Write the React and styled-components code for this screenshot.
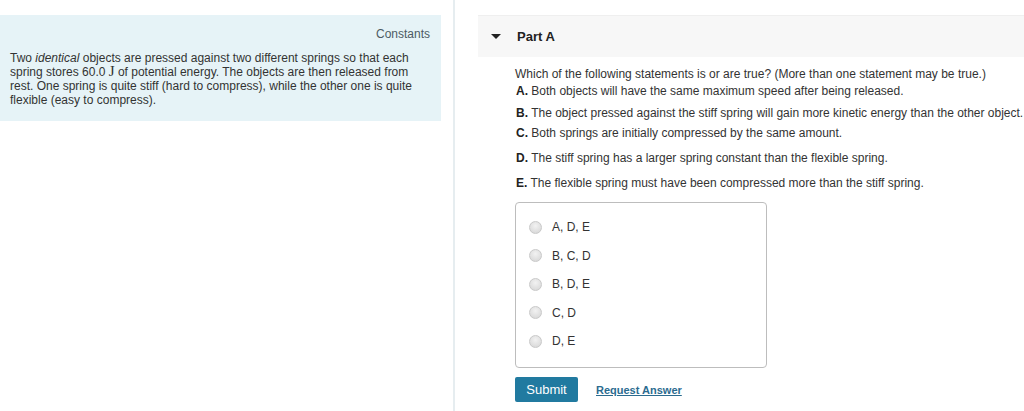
import React from 'react'
import styled, { createGlobalStyle } from 'styled-components'

const GlobalStyle = createGlobalStyle`
  html, body {
    margin: 0;
    padding: 0;
    background: #fff;
    font-family: "Liberation Sans", Arial, sans-serif;
    color: #333;
  }
`;

const Page = styled.div`
  display: flex;
  width: 1024px;
  height: 411px;
  overflow: hidden;
`;

const LeftColumn = styled.div`
  width: 455px;
  flex-shrink: 0;
  padding-top: 15px;
  box-sizing: border-box;
  border-right: 2px solid #e6edf0;
`;

const InfoPanel = styled.div`
  width: 441px;
  height: 106px;
  box-sizing: border-box;
  background: #e6f3f7;
  padding: 12px 11px 0 10px;
`;

const ConstantsLink = styled.div`
  text-align: right;
  font-size: 12px;
  line-height: 14px;
  color: #4d5b63;
`;

const Intro = styled.p`
  margin: 10px 0 0;
  font-size: 12px;
  line-height: 14px;
  color: #333;
  em {
    font-style: italic;
  }
`;

const Unit = styled.span`
  font-family: "Liberation Serif", "Times New Roman", serif;
  font-size: 15px;
  line-height: 12px;
`;

const RightColumn = styled.div`
  flex: 1;
  padding-top: 15px;
`;

const PartHeader = styled.div`
  margin-left: 23px;
  height: 42px;
  display: flex;
  align-items: center;
  background: #f7f7f7;
  border-top: 1px solid #efefef;
  box-sizing: border-box;
`;

const Caret = styled.span`
  width: 0;
  height: 0;
  margin-left: 13px;
  border-left: 5px solid transparent;
  border-right: 5px solid transparent;
  border-top: 5px solid #222;
`;

const PartTitle = styled.h2`
  margin: 0 0 0 16px;
  font-size: 13px;
  font-weight: bold;
  color: #222;
`;

const Body = styled.div`
  padding: 10px 0 0 60px;
`;

const Question = styled.p`
  margin: 0;
  font-size: 12px;
  line-height: 15px;
  color: #333;
`;

const Statement = styled.p`
  margin: ${(p) => p.$mt}px 0 0 1px;
  font-size: 12px;
  line-height: 15px;
  color: #333;
  b {
    color: #222;
  }
`;

const OptionsBox = styled.div`
  margin-top: 11px;
  width: 252px;
  height: 166px;
  box-sizing: border-box;
  border: 1px solid #bdbdbd;
  border-radius: 4px;
  padding: 17px 0 0 13px;
  display: flex;
  flex-direction: column;
  gap: 14px;
`;

const Option = styled.label`
  display: flex;
  align-items: center;
  height: 14.5px;
  font-size: 12px;
  color: #333;
`;

const Radio = styled.span`
  width: 11px;
  height: 11px;
  border-radius: 50%;
  border: 1px solid #c9c9c9;
  background: radial-gradient(circle at 50% 35%, #f2f2f2, #d4d4d4);
  margin-right: 10px;
`;

const Actions = styled.div`
  margin-top: 9px;
  display: flex;
  align-items: center;
  gap: 18px;
`;

const SubmitButton = styled.button`
  width: 63px;
  height: 25px;
  border: none;
  border-radius: 2px;
  background: #217aa0;
  color: #fff;
  font-family: "Liberation Sans", Arial, sans-serif;
  font-size: 13px;
  padding: 0;
`;

const RequestLink = styled.a`
  font-size: 11px;
  font-weight: bold;
  color: #2b6b8f;
  text-decoration: underline;
`;

const statements = [
  { key: 'A', text: 'Both objects will have the same maximum speed after being released.', mt: 2 },
  { key: 'B', text: 'The object pressed against the stiff spring will gain more kinetic energy than the other object.', mt: 7 },
  { key: 'C', text: 'Both springs are initially compressed by the same amount.', mt: 5 },
  { key: 'D', text: 'The stiff spring has a larger spring constant than the flexible spring.', mt: 10 },
  { key: 'E', text: 'The flexible spring must have been compressed more than the stiff spring.', mt: 10 },
];

const options = ['A, D, E', 'B, C, D', 'B, D, E', 'C, D', 'D, E'];

export default function App() {
  return (
    <>
      <GlobalStyle />
      <Page>
        <LeftColumn>
          <InfoPanel>
            <ConstantsLink>Constants</ConstantsLink>
            <Intro>
              Two <em>identical</em> objects are pressed against two different springs so that each
              spring stores 60.0 <Unit>J</Unit> of potential energy. The objects are then released from
              rest. One spring is quite stiff (hard to compress), while the other one is quite
              flexible (easy to compress).
            </Intro>
          </InfoPanel>
        </LeftColumn>
        <RightColumn>
          <PartHeader>
            <Caret />
            <PartTitle>Part A</PartTitle>
          </PartHeader>
          <Body>
            <Question>
              Which of the following statements is or are true? (More than one statement may be true.)
            </Question>
            {statements.map((s) => (
              <Statement key={s.key} $mt={s.mt}>
                <b>{s.key}.</b> {s.text}
              </Statement>
            ))}
            <OptionsBox>
              {options.map((o) => (
                <Option key={o}>
                  <Radio />
                  {o}
                </Option>
              ))}
            </OptionsBox>
            <Actions>
              <SubmitButton>Submit</SubmitButton>
              <RequestLink href="#">Request Answer</RequestLink>
            </Actions>
          </Body>
        </RightColumn>
      </Page>
    </>
  )
}
